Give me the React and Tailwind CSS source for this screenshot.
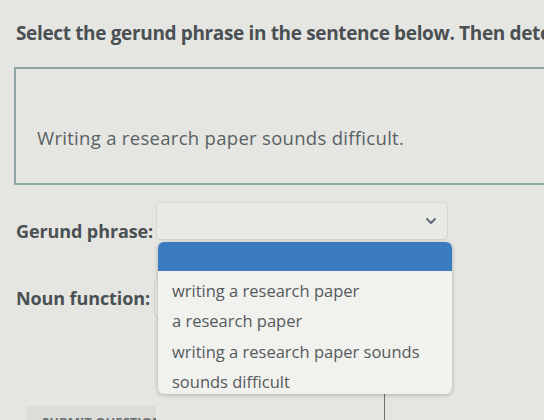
import { ChevronDown } from "lucide-react";

const options = [
  "writing a research paper",
  "a research paper",
  "writing a research paper sounds",
  "sounds difficult",
];

export default function App() {
  return (
    <div className="w-[544px] h-[420px] overflow-hidden bg-[#e5e6e1] font-['Open_Sans',sans-serif] text-[#4d5356]">
      {/* question prompt */}
      <div className="pt-[19px] pl-[16px] whitespace-nowrap text-[19px] font-bold leading-[28px] tracking-[-0.35px] text-[#4a5053]">
        Select the gerund phrase in the sentence below. Then determine its function.
      </div>

      {/* sentence box */}
      <div className="mt-[20px] ml-[14px] w-[560px] h-[118px] border-2 border-[#8fa8a6] flex items-center pl-[21px] pt-[24px] text-[18.5px] tracking-[0.3px] text-[#596165]">
        Writing a research paper sounds difficult.
      </div>

      {/* gerund phrase row */}
      <div className="mt-[17px] flex">
        <div className="w-[156px] pl-[16px] pt-[16px] text-[18px] font-bold leading-[26px] tracking-[-0.1px] text-[#4a5053]">
          Gerund phrase:
        </div>
        <div className="relative w-[292px] h-[38px] rounded-[4px] border border-[#d4d6d2] bg-[#e9eae6]">
          <ChevronDown size={16} strokeWidth={3} className="absolute right-[8px] top-[10px] text-[#5d6a78]" />

          {/* open dropdown */}
          <div className="absolute left-[1px] top-[39px] z-10 w-[294px] h-[152px] rounded-[6px] bg-[#f1f1ed] shadow-[0_1px_4px_rgba(0,0,0,0.25)] overflow-hidden">
            <div className="h-[29px] bg-[#3b7cc0]" />
            <div className="pt-[5px] flex flex-col">
              {options.map((o) => (
                <div key={o} className="h-[30.5px] flex items-center pl-[14px] text-[16.5px] text-[#545a5e]">
                  {o}
                </div>
              ))}
            </div>
          </div>
        </div>
      </div>

      {/* noun function row */}
      <div className="mt-[35px] flex items-center">
        <div className="w-[154px] pl-[16px] text-[18px] font-bold leading-[26px] tracking-[-0.1px] text-[#4a5053]">
          Noun function:
        </div>
        <div className="w-[294px] h-[38px] rounded-[4px] border border-[#cfd1cd] bg-[#e9eae6]" />
      </div>

      {/* bottom area */}
      <div className="mt-[89px] flex">
        <div className="ml-[26px] w-[130px] h-[24px] bg-[#dcddd8] pl-[16px] pt-[10px] text-[13px] font-bold leading-none text-[#6a6f72] whitespace-nowrap overflow-hidden">
          SUBMIT QUESTION
        </div>
        <div className="ml-[228px] -mt-[40px] w-px h-[64px] bg-[#6d7275]" />
      </div>
    </div>
  );
}
